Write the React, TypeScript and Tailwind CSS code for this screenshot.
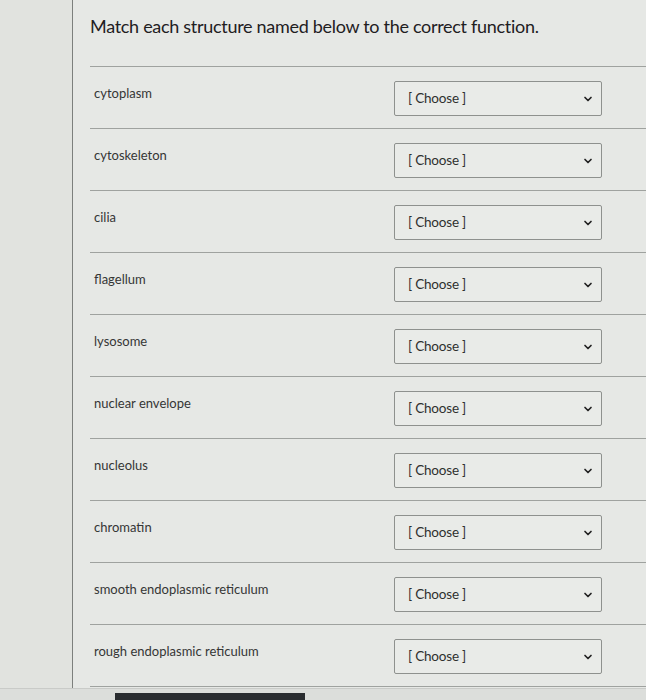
import { ChevronDown } from "lucide-react";

const structures = [
  "cytoplasm",
  "cytoskeleton",
  "cilia",
  "flagellum",
  "lysosome",
  "nuclear envelope",
  "nucleolus",
  "chromatin",
  "smooth endoplasmic reticulum",
  "rough endoplasmic reticulum",
];

export default function App() {
  return (
    <div className="flex h-[700px] w-[646px] flex-col overflow-hidden bg-[#e3e5e2] font-['Lato','Open_Sans',sans-serif] text-[#2e2f2e]">
      <div className="flex flex-1">
        {/* left gutter */}
        <div className="w-[73px] shrink-0 border-r border-[#7d807d] bg-[#e1e3df]" />

        <div className="flex-1 bg-[#e6e8e5] pl-[17px]">
          <h1 className="pt-[13px] text-[18px] leading-[26px] tracking-[-0.3px] text-[#1f201f]">
            Match each structure named below to the correct function.
          </h1>

          <div className="mt-[27px]">
            {structures.map((name) => (
              <div
                key={name}
                className="flex h-[62px] border-t border-[#9fa29f]"
              >
                <div className="w-[304px] shrink-0 pl-[4px] pt-[18px] text-[13px] leading-[16px] text-[#353635]">
                  {name}
                </div>
                <div className="pt-[14px]">
                  <div className="flex h-[35px] w-[208px] items-center justify-between rounded-[2px] border border-[#8e918e] bg-[#e9ebe8] pl-[13px] pr-[7px]">
                    <span className="text-[13.5px] tracking-[-0.2px] text-[#2f302f]">[ Choose ]</span>
                    <ChevronDown size={12} strokeWidth={3.4} className="text-[#222]" />
                  </div>
                </div>
              </div>
            ))}
            <div className="border-t border-[#9fa29f]" />
          </div>
        </div>
      </div>

      {/* bottom strip */}
      <div className="flex h-[12px] shrink-0 border-t border-[#c9cbc8] bg-[#dcdedb]">
        <div className="ml-[115px] mt-[4px] h-[8px] w-[190px] bg-[#2a2d30]" />
      </div>
    </div>
  );
}
